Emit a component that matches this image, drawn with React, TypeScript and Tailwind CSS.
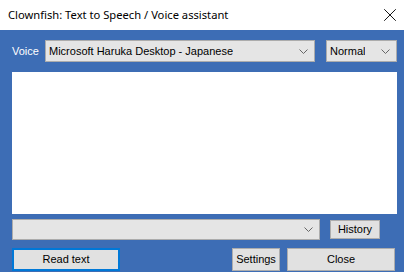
import { X } from "lucide-react";

function Chevron() {
  return (
    <svg width="9" height="5" viewBox="0 0 9 5" className="shrink-0">
      <path d="M0.5 0.5 L4.5 4.5 L8.5 0.5" fill="none" stroke="#666" strokeWidth="1" />
    </svg>
  );
}

function Combo({ label, className }: { label: string; className: string }) {
  return (
    <div
      className={`flex items-center justify-between border border-[#acacac] bg-[#e5e5e5] pl-[3px] pr-[6px] text-[11px] text-black ${className}`}
    >
      <span className="truncate">{label}</span>
      <Chevron />
    </div>
  );
}

export default function App() {
  return (
    <div
      className="flex h-[272px] w-[404px] flex-col overflow-hidden bg-[#3d6db5]"
      style={{ fontFamily: '"Liberation Sans", Arial, sans-serif' }}
    >
      {/* Title bar */}
      <div className="flex h-[30px] items-center justify-between bg-white pl-[8px] pr-[3px]">
        <span className="text-[11.2px] text-black" style={{ fontFamily: '"Noto Sans", sans-serif' }}>
          Clownfish: Text to Speech / Voice assistant
        </span>
        <X size={22} strokeWidth={1} className="text-black" />
      </div>

      <div className="flex flex-col pl-[12px] pr-[7px]">
        {/* Voice row */}
        <div className="mt-[10px] flex h-[22px] items-center">
          <span className="w-[33px] text-[11px] text-white">Voice</span>
          <Combo label="Microsoft Haruka Desktop - Japanese" className="h-[22px] w-[270px]" />
          <Combo label="Normal" className="ml-[11px] h-[22px] w-[71px]" />
        </div>

        {/* Text area */}
        <div className="mt-[10px] h-[142px] w-[385px] bg-white" />

        {/* History row */}
        <div className="mt-[5px] flex items-center">
          <Combo label="" className="h-[21px] w-[308px]" />
          <button className="ml-[10px] h-[19px] w-[50px] border border-[#adadad] bg-[#e1e1e1] text-[11px] text-black">
            History
          </button>
        </div>

        {/* Buttons */}
        <div className="mt-[8px] flex h-[23px] items-center">
          <button className="h-[23px] w-[108px] border-2 border-[#0078d7] bg-[#e1e1e1] text-[11px] text-black">
            Read text
          </button>
          <button className="ml-[112px] h-[23px] w-[48px] border border-[#adadad] bg-[#e1e1e1] text-[11px] text-black">
            Settings
          </button>
          <button className="ml-[7px] h-[23px] w-[108px] border border-[#adadad] bg-[#e1e1e1] text-[11px] text-black">
            Close
          </button>
        </div>
      </div>
    </div>
  );
}
